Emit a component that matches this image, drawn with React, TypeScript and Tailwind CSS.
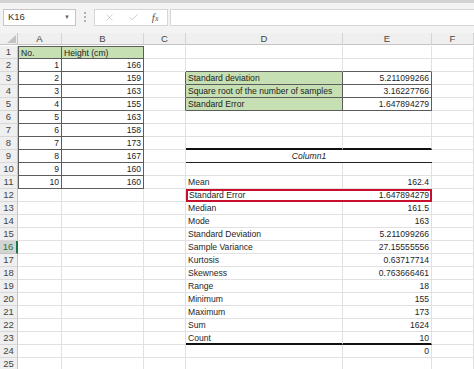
import { X, Check } from 'lucide-react';

type Cell = { v?: string; num?: boolean; fill?: boolean };

const COLS = ['A', 'B', 'C', 'D', 'E', 'F'];
const HEIGHTS = ['166', '159', '163', '155', '163', '158', '173', '167', '160', '160'];

const STATS: [string, string][] = [
  ['Mean', '162.4'],
  ['Standard Error', '1.647894279'],
  ['Median', '161.5'],
  ['Mode', '163'],
  ['Standard Deviation', '5.211099266'],
  ['Sample Variance', '27.15555556'],
  ['Kurtosis', '0.63717714'],
  ['Skewness', '0.763666461'],
  ['Range', '18'],
  ['Minimum', '155'],
  ['Maximum', '173'],
  ['Sum', '1624'],
  ['Count', '10'],
];

// build the 25 x 6 sheet
const sheet: Cell[][] = Array.from({ length: 25 }, () => COLS.map(() => ({})));
sheet[0][0] = { v: 'No.', fill: true };
sheet[0][1] = { v: 'Height (cm)', fill: true };
HEIGHTS.forEach((h, i) => {
  sheet[i + 1][0] = { v: String(i + 1), num: true };
  sheet[i + 1][1] = { v: h, num: true };
});
sheet[2][3] = { v: 'Standard deviation', fill: true };
sheet[2][4] = { v: '5.211099266', num: true };
sheet[3][3] = { v: 'Square root of the number of samples', fill: true };
sheet[3][4] = { v: '3.16227766', num: true };
sheet[4][3] = { v: 'Standard Error', fill: true };
sheet[4][4] = { v: '1.647894279', num: true };
STATS.forEach(([k, v], i) => {
  sheet[10 + i][3] = { v: k };
  sheet[10 + i][4] = { v, num: true };
});
sheet[23][4] = { v: '0', num: true };

// ranges with thin outlines (0-based row, col)
const boxed = (r: number, c: number) =>
  (r >= 0 && r <= 10 && c >= 0 && c <= 1) || (r >= 2 && r <= 4 && c >= 3 && c <= 4);

function cellBorders(r: number, c: number) {
  const stat = c === 3 || c === 4;
  if (stat && (r === 7 || r === 22)) return 'border-r border-b-2 border-r-[#e1e1e1] border-b-[#111]';
  if (stat && r === 8) return 'border-r border-b border-r-[#e1e1e1] border-b-[#222]';
  const right = boxed(r, c) || boxed(r, c + 1) ? 'border-r-[#5c5c5c]' : 'border-r-[#e1e1e1]';
  const bottom = boxed(r, c) || boxed(r + 1, c) ? 'border-b-[#5c5c5c]' : 'border-b-[#e1e1e1]';
  const extra = boxed(r, c) && r === 0 ? ' border-t border-t-[#5c5c5c]' : '';
  const left = boxed(r, c) && c === 0 ? ' border-l border-l-[#5c5c5c]' : '';
  return `border-r border-b ${right} ${bottom}${extra}${left}`;
}

function FormulaBar() {
  return (
    <div className="bg-[#f3f3f3]">
      <div className="h-[3px] bg-[#d3d3d3]" />
      <div className="flex h-[30px] items-center pb-[2px]">
        <div className="ml-[3px] flex h-[17px] w-[73px] items-center justify-between border border-[#c6c6c6] bg-white pl-[4px] pr-[5px]">
          <span className="text-[9.5px] text-[#333]">K16</span>
          <span className="text-[6px] text-[#666]">▼</span>
        </div>
        <div className="ml-[5px] flex w-[8px] flex-col items-center gap-[2px]">
          <span className="h-[2px] w-[2px] bg-[#b0b0b0]" />
          <span className="h-[2px] w-[2px] bg-[#b0b0b0]" />
          <span className="h-[2px] w-[2px] bg-[#b0b0b0]" />
        </div>
        <div className="ml-[5px] flex h-[17px] w-[74px] items-center justify-around border border-[#d6d6d6] bg-white px-[2px]">
          <X size={11} strokeWidth={1.3} className="text-[#b4b4b4]" />
          <Check size={11} strokeWidth={1.5} className="text-[#b4b4b4]" />
          <span className="font-['Liberation_Serif',serif] text-[11px] italic text-[#555]">
            f<span className="text-[8px]">x</span>
          </span>
        </div>
        <div className="ml-[2px] h-[17px] flex-1 border border-r-0 border-[#d6d6d6] bg-white" />
      </div>
    </div>
  );
}

export default function App() {
  return (
    <div className="h-[369px] w-[474px] overflow-hidden bg-white font-['Liberation_Sans',Arial,sans-serif]">
      <FormulaBar />
      <div className="grid grid-cols-[18px_44px_82px_42px_157px_89px_1fr] auto-rows-[13px] text-[8.6px] text-[#1e1e1e]">
        {/* column headers */}
        <div className="relative h-[12px] border-r border-b border-[#c4c4c4] bg-[#efefef]">
          <svg className="absolute right-[1px] bottom-[1px]" width="9" height="8" viewBox="0 0 9 8">
            <path d="M9 0 L9 8 L0 8 Z" fill="#c2c2c2" />
          </svg>
        </div>
        {COLS.map((c) => (
          <div
            key={c}
            className="flex h-[12px] items-center justify-center border-r border-b border-r-[#d4d4d4] border-b-[#c4c4c4] bg-[#efefef] text-[9.5px] leading-none text-[#444]"
          >
            {c}
          </div>
        ))}

        {sheet.map((row, r) => {
          const active = r === 15;
          return [
            <div
              key={`h${r}`}
              className={
                active
                  ? 'flex items-center justify-center border-r-2 border-b border-r-[#217346] border-b-[#c4c4c4] bg-[#d3d3d3] text-[9.5px] leading-none text-[#217346]'
                  : 'flex items-center justify-center border-r border-b border-r-[#c4c4c4] border-b-[#d8d8d8] bg-[#efefef] text-[9.5px] leading-none text-[#444]'
              }
            >
              {r + 1}
            </div>,
            ...row.map((cell, c) => {
              if (r === 8 && c === 4) return null;
              if (r === 8 && c === 3) {
                return (
                  <div
                    key={`${r}-${c}`}
                    className="col-span-2 flex items-center justify-center border-b border-b-[#222] italic leading-none"
                  >
                    Column1
                  </div>
                );
              }
              if (r === 11 && (c === 3 || c === 4)) {
                return (
                  <div
                    key={`${r}-${c}`}
                    className={`flex items-center overflow-visible whitespace-nowrap border-y-2 border-[#c8102e] leading-none ${
                      c === 3 ? 'border-l-2 pl-[1px]' : 'justify-end border-r-2 pr-[1px]'
                    }`}
                  >
                    {cell.v}
                  </div>
                );
              }
              return (
                <div
                  key={`${r}-${c}`}
                  className={`flex items-center whitespace-nowrap px-[2px] pt-[1px] leading-none ${cellBorders(r, c)} ${
                    cell.num ? 'justify-end' : ''
                  } ${cell.fill ? 'bg-[#c6e0b4]' : ''}`}
                >
                  {cell.v}
                </div>
              );
            }),
          ];
        })}
      </div>
    </div>
  );
}
